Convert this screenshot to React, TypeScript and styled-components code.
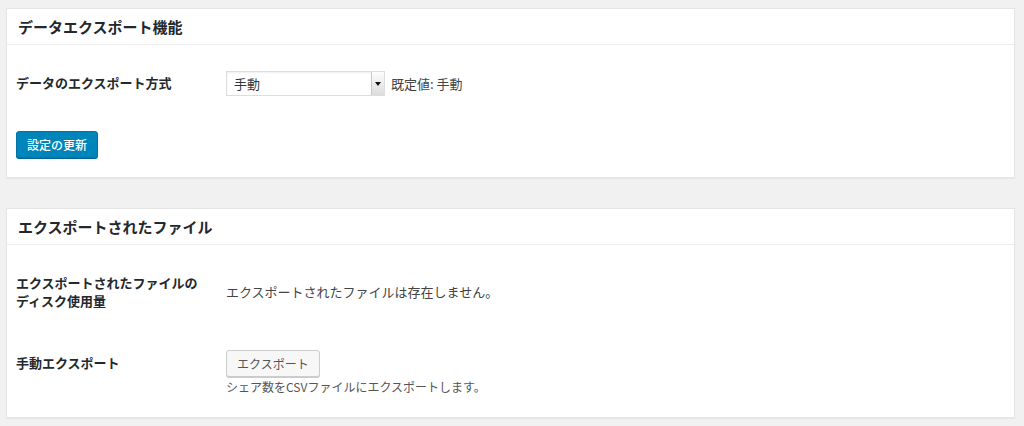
import React from 'react'
import styled, { createGlobalStyle } from 'styled-components'

const GlobalStyle = createGlobalStyle`
  html, body {
    margin: 0;
    padding: 0;
    background: #f1f1f1;
  }
  body {
    font-family: "Noto Sans CJK JP", "Liberation Sans", sans-serif;
    color: #23282d;
    font-size: 13px;
  }
`

const Page = styled.div`
  padding: 8px 9px 8px 6px;
  display: flex;
  flex-direction: column;
  gap: 30px;
`

const Panel = styled.section`
  background: #fff;
  border: 1px solid #e5e5e5;
  box-shadow: 0 1px 1px rgba(0, 0, 0, 0.04);
`

const PanelHeader = styled.h2`
  margin: 0;
  height: 35px;
  padding: 0 11px;
  display: flex;
  align-items: center;
  font-size: 15px;
  font-weight: 700;
  color: #23282d;
  border-bottom: 1px solid #eee;
`

const PanelBody = styled.div<{ $top: number; $bottom: number; $gap: number }>`
  padding: ${p => p.$top}px 9px ${p => p.$bottom}px 9px;
  display: flex;
  flex-direction: column;
  gap: ${p => p.$gap}px;
`

const Row = styled.div<{ $center?: boolean }>`
  display: flex;
  align-items: ${p => (p.$center ? 'center' : 'flex-start')};
`

const Label = styled.div<{ $pad?: number }>`
  width: 210px;
  flex-shrink: 0;
  font-weight: 700;
  font-size: 13px;
  line-height: 18px;
  padding-top: ${p => p.$pad ?? 0}px;
  color: #23282d;
`

const Field = styled.div`
  display: flex;
  flex-direction: column;
  align-items: flex-start;
  font-size: 13px;
  line-height: 18px;
  color: #444;
`

const Inline = styled.div`
  display: flex;
  align-items: center;
  gap: 6px;
`

const SelectBox = styled.div`
  width: 159px;
  height: 25px;
  box-sizing: border-box;
  display: flex;
  border: 1px solid #ddd;
  background: #fff;
  box-shadow: inset 0 1px 2px rgba(0, 0, 0, 0.07);
`

const SelectText = styled.span`
  flex: 1;
  padding-left: 7px;
  display: flex;
  align-items: center;
  font-size: 13px;
  color: #32373c;
`

const SelectArrow = styled.span`
  width: 12px;
  display: flex;
  align-items: center;
  justify-content: center;
  background: linear-gradient(#fdfdfd, #dcdcdc);
  border-left: 1px solid #c8c8c8;
  svg {
    display: block;
  }
`

const Hint = styled.span`
  color: #444;
  font-size: 13px;
`

const PrimaryButton = styled.button`
  align-self: flex-start;
  height: 27px;
  padding: 0 10px 1px;
  font-family: inherit;
  font-size: 12px;
  font-weight: 500;
  color: #fff;
  background: #0085ba;
  border: 1px solid #0073aa;
  border-radius: 3px;
  box-shadow: 0 1px 0 #006799;
  cursor: pointer;
`

const SecondaryButton = styled.button`
  height: 27px;
  padding: 0 10px 1px;
  font-family: inherit;
  font-size: 12px;
  color: #555;
  background: #f7f7f7;
  border: 1px solid #ccc;
  border-radius: 3px;
  box-shadow: 0 1px 0 #ccc;
  cursor: pointer;
`

const Description = styled.p`
  margin: 1px 0 0;
  font-size: 12px;
  line-height: 18px;
  color: #555;
`

const App = () => {
  return (
    <>
      <GlobalStyle />
      <Page>
        <Panel>
          <PanelHeader>データエクスポート機能</PanelHeader>
          <PanelBody $top={26} $bottom={19} $gap={35}>
            <Row>
              <Label $pad={3}>データのエクスポート方式</Label>
              <Inline>
                <SelectBox>
                  <SelectText>手動</SelectText>
                  <SelectArrow>
                    <svg width="6" height="4" viewBox="0 0 6 4">
                      <path d="M0 0h6L3 4z" fill="#111" />
                    </svg>
                  </SelectArrow>
                </SelectBox>
                <Hint>既定値: 手動</Hint>
              </Inline>
            </Row>
            <PrimaryButton>設定の更新</PrimaryButton>
          </PanelBody>
        </Panel>
        <Panel>
          <PanelHeader>エクスポートされたファイル</PanelHeader>
          <PanelBody $top={29} $bottom={21} $gap={40}>
            <Row $center>
              <Label>
                エクスポートされたファイルの
                <br />
                ディスク使用量
              </Label>
              <Field>エクスポートされたファイルは存在しません。</Field>
            </Row>
            <Row>
              <Label $pad={4}>手動エクスポート</Label>
              <Field>
                <SecondaryButton>エクスポート</SecondaryButton>
                <Description>シェア数をCSVファイルにエクスポートします。</Description>
              </Field>
            </Row>
          </PanelBody>
        </Panel>
      </Page>
    </>
  )
}

export default App
